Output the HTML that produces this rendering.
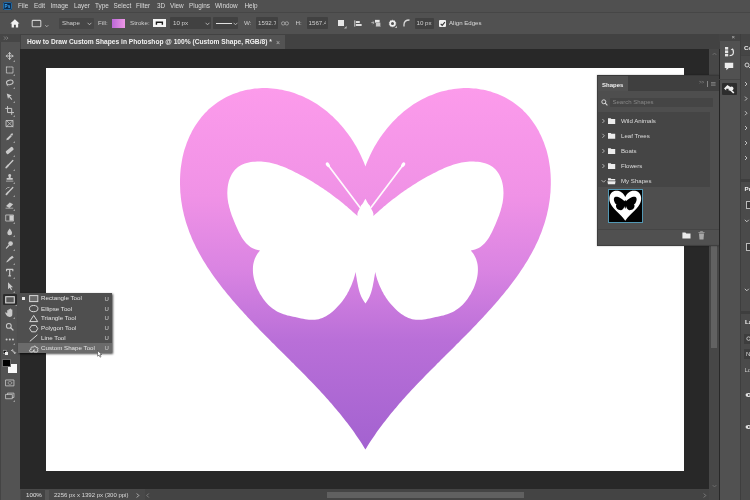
<!DOCTYPE html>
<html lang="en">
<head>
<meta charset="utf-8">
<title>How to Draw Custom Shapes in Photoshop</title>
<style>
*{margin:0;padding:0;box-sizing:border-box}
html,body{width:750px;height:500px;overflow:hidden;background:#282828}
body{position:relative;font-family:"Liberation Sans",sans-serif;color:#d8d8d8;font-size:6.2px;line-height:1}
.abs{position:absolute}
.t{position:absolute;white-space:nowrap;line-height:1}
svg{position:absolute;overflow:visible;filter:blur(.3px)}
.t{filter:blur(.35px)}
#menubar{left:0;top:0;width:750px;height:12px;background:#505050}
#optbar{left:0;top:12px;width:750px;height:22px;background:#515151;border-top:1px solid #464646}
#tabbar{left:0;top:33.5px;width:750px;height:15.5px;background:#424242}
#tab{left:21px;top:35px;width:264px;height:14px;background:#535353}
#toolbar{left:0;top:34px;width:19.8px;height:466px;background:#535353;border-left:1.2px solid #444}
#toolhead{left:0;top:34px;width:20px;height:8px;background:#464646}
#work{left:20px;top:49px;width:699px;height:440px;background:#282828}
#canvas{left:46.3px;top:67.5px;width:638.2px;height:403.5px;background:#fff}
#status{left:20px;top:489.4px;width:689px;height:10.6px;background:linear-gradient(90deg,#494949 0,#494949 125px,#444 125px)}
#zoomfld{left:20.5px;top:489.6px;width:24px;height:10.4px;background:#434343;border-right:4px solid #555;box-sizing:content-box}
#vscroll{left:709px;top:49px;width:10px;height:451px;background:#474747}
#vthumb{left:711px;top:245px;width:6px;height:103px;background:#626262}
#iconcol{left:719.5px;top:40.5px;width:20px;height:459.5px;background:#515151}
#rightp{left:741px;top:42px;width:9px;height:458px;background:#4a4a4a}
#rgap{left:739.5px;top:34px;width:1.5px;height:466px;background:#3e3e3e}
#rtop{left:719px;top:33.5px;width:31px;height:8.5px;background:#444}
.fld{position:absolute;background:#414141;border-radius:1px}
/* shapes panel */
#sp{left:596.6px;top:75.2px;width:122.4px;height:170.7px;background:#4e4e4e;border-left:1px solid #3e3e3e;border-bottom:1.6px solid #3f3f3f;border-top:.8px solid #383838;box-shadow:0 0 1.5px rgba(0,0,0,.35)}
#sphead{left:597.6px;top:76px;width:121.4px;height:15.3px;background:#3f3f3f}
#sptab{left:597.6px;top:76px;width:30px;height:15.3px;background:#515151}
#splist{left:597.6px;top:111.6px;width:112px;height:75px;background:#454545}
#spfoot{left:597.6px;top:229px;width:121.4px;height:15.3px;background:#505050;border-top:1px solid #454545}
#spsearch{left:610px;top:98px;width:102.6px;height:8.6px;background:#454545;border-radius:1px}
/* flyout */
#fly{left:18px;top:293px;width:94px;height:59.8px;background:#4f4f4f;box-shadow:1px 1px 2px rgba(0,0,0,.7)}
#flysel{left:18px;top:343px;width:94px;height:9.8px;background:#6b6b6b}
.m{top:3.2px;font-size:6.4px;color:#dadada}
.o{top:20.2px;font-size:6.2px;color:#cfcfcf}
.f{font-size:6.2px;left:41px;color:#e2e2e2}
.u{font-size:6px;left:104.5px;color:#cfcfcf}
.s{font-size:6.1px;left:621px;color:#dedede}
</style>
</head>
<body>
<div class="abs" id="menubar"></div>
<div class="abs" id="optbar"></div>
<div class="abs" id="tabbar"></div>
<div class="abs" id="tab"></div>
<div class="abs" id="work"></div>
<div class="abs" id="canvas"></div>

<!-- artwork -->
<svg style="left:0;top:0" width="750" height="500" viewBox="0 0 750 500">
<defs>
<linearGradient id="hg" x1="0" y1="88" x2="0" y2="449" gradientUnits="userSpaceOnUse">
<stop offset="0" stop-color="#fc9beb"/>
<stop offset="0.3" stop-color="#f092e6"/>
<stop offset="0.5" stop-color="#da84e2"/>
<stop offset="0.7" stop-color="#b96fd8"/>
<stop offset="1" stop-color="#a362d0"/>
</linearGradient>
</defs>
<path d="M365.4 166.5L364.6 164.2L363.7 161.9L362.7 159.7L361.7 157.4L360.7 155.2L359.6 152.9L358.5 150.7L357.3 148.5L356.1 146.3L354.8 144.2L353.5 142.0L352.2 139.9L350.8 137.8L349.3 135.7L347.9 133.7L346.3 131.7L344.8 129.7L343.2 127.7L341.5 125.8L339.9 123.9L338.2 122.0L336.4 120.2L334.6 118.4L332.8 116.6L330.9 114.9L329.0 113.2L327.1 111.6L325.1 110.0L323.1 108.5L321.0 107.0L319.0 105.5L316.9 104.1L314.7 102.8L312.6 101.5L310.4 100.2L308.1 99.0L305.9 97.9L303.6 96.8L301.3 95.8L298.9 94.9L296.6 93.9L294.2 93.1L291.8 92.3L289.4 91.6L286.9 91.0L284.5 90.4L282.0 89.8L279.6 89.4L277.1 89.0L274.6 88.7L272.1 88.4L269.6 88.2L267.1 88.1L264.6 88.1L262.1 88.1L259.6 88.2L257.2 88.4L254.7 88.6L252.2 89.0L249.8 89.4L247.3 89.8L244.9 90.3L242.5 90.9L240.1 91.6L237.8 92.4L235.4 93.2L233.1 94.0L230.9 95.0L228.6 96.0L226.4 97.1L224.2 98.2L222.1 99.4L220.0 100.7L218.0 102.0L216.0 103.4L214.0 104.9L212.1 106.4L210.2 108.0L208.4 109.6L206.7 111.4L205.0 113.1L203.3 114.9L201.7 116.8L200.2 118.7L198.7 120.7L197.3 122.7L195.9 124.7L194.6 126.8L193.3 129.0L192.1 131.1L191.0 133.4L189.9 135.6L188.8 137.9L187.9 140.2L186.9 142.5L186.1 144.9L185.3 147.2L184.5 149.6L183.8 152.0L183.2 154.5L182.6 156.9L182.1 159.4L181.7 161.9L181.3 164.4L180.9 166.9L180.6 169.4L180.4 171.9L180.2 174.4L180.1 177.0L180.0 179.5L180.0 182.0L180.0 184.6L180.1 187.1L180.2 189.7L180.3 192.2L180.6 194.7L180.8 197.3L181.1 199.8L181.5 202.3L181.9 204.8L182.3 207.3L182.8 209.8L183.4 212.3L183.9 214.8L184.6 217.2L185.2 219.6L185.9 222.0L186.7 224.4L187.5 226.8L188.3 229.1L189.1 231.5L190.0 233.8L191.0 236.1L191.9 238.4L192.9 240.7L194.0 242.9L195.0 245.1L196.1 247.4L197.2 249.6L198.4 251.8L199.6 253.9L200.8 256.1L202.0 258.2L203.3 260.4L204.6 262.5L205.9 264.6L207.2 266.7L208.6 268.8L210.0 270.8L211.4 272.9L212.8 274.9L214.2 276.9L215.7 279.0L217.2 281.0L218.7 282.9L220.2 284.9L221.7 286.9L223.2 288.9L224.8 290.8L226.3 292.7L227.9 294.7L229.5 296.6L231.1 298.5L232.7 300.4L234.3 302.3L236.0 304.2L237.6 306.1L239.3 307.9L240.9 309.8L242.6 311.6L244.3 313.5L246.0 315.3L247.7 317.2L249.4 319.0L251.1 320.8L252.8 322.6L254.5 324.5L256.3 326.3L258.0 328.1L259.8 329.9L261.5 331.7L263.3 333.4L265.0 335.2L266.8 337.0L268.6 338.8L270.3 340.6L272.1 342.4L273.9 344.1L275.7 345.9L277.4 347.7L279.2 349.5L281.0 351.2L282.8 353.0L284.6 354.8L286.3 356.5L288.1 358.3L289.9 360.1L291.7 361.9L293.5 363.6L295.2 365.4L297.0 367.2L298.8 369.0L300.6 370.8L302.3 372.5L304.1 374.3L305.8 376.1L307.6 377.9L309.3 379.7L311.1 381.5L312.8 383.3L314.5 385.1L316.3 386.9L318.0 388.8L319.7 390.6L321.4 392.4L323.1 394.3L324.7 396.1L326.4 398.0L328.1 399.8L329.7 401.7L331.4 403.6L333.0 405.5L334.6 407.4L336.2 409.3L337.8 411.2L339.4 413.1L341.0 415.0L342.5 416.9L344.1 418.9L345.6 420.9L347.1 422.8L348.6 424.8L350.1 426.8L351.6 428.8L353.1 430.8L354.5 432.8L355.9 434.9L357.3 436.9L358.7 439.0L360.1 441.1L361.4 443.1L362.8 445.3L364.1 447.4L365.4 449.5L366.7 447.4L368.0 445.3L369.4 443.1L370.7 441.1L372.1 439.0L373.5 436.9L374.9 434.9L376.3 432.8L377.7 430.8L379.2 428.8L380.7 426.8L382.2 424.8L383.7 422.8L385.2 420.9L386.7 418.9L388.3 416.9L389.8 415.0L391.4 413.1L393.0 411.2L394.6 409.3L396.2 407.4L397.8 405.5L399.4 403.6L401.1 401.7L402.7 399.8L404.4 398.0L406.1 396.1L407.7 394.3L409.4 392.4L411.1 390.6L412.8 388.8L414.5 386.9L416.3 385.1L418.0 383.3L419.7 381.5L421.5 379.7L423.2 377.9L425.0 376.1L426.7 374.3L428.5 372.5L430.2 370.8L432.0 369.0L433.8 367.2L435.6 365.4L437.3 363.6L439.1 361.9L440.9 360.1L442.7 358.3L444.5 356.5L446.2 354.8L448.0 353.0L449.8 351.2L451.6 349.5L453.4 347.7L455.1 345.9L456.9 344.1L458.7 342.4L460.5 340.6L462.2 338.8L464.0 337.0L465.8 335.2L467.5 333.4L469.3 331.7L471.0 329.9L472.8 328.1L474.5 326.3L476.3 324.5L478.0 322.6L479.7 320.8L481.4 319.0L483.1 317.2L484.8 315.3L486.5 313.5L488.2 311.6L489.9 309.8L491.5 307.9L493.2 306.1L494.8 304.2L496.5 302.3L498.1 300.4L499.7 298.5L501.3 296.6L502.9 294.7L504.5 292.7L506.0 290.8L507.6 288.9L509.1 286.9L510.6 284.9L512.1 282.9L513.6 281.0L515.1 279.0L516.6 276.9L518.0 274.9L519.4 272.9L520.8 270.8L522.2 268.8L523.6 266.7L524.9 264.6L526.2 262.5L527.5 260.4L528.8 258.2L530.0 256.1L531.2 253.9L532.4 251.8L533.6 249.6L534.7 247.4L535.8 245.1L536.8 242.9L537.9 240.7L538.9 238.4L539.8 236.1L540.8 233.8L541.7 231.5L542.5 229.1L543.3 226.8L544.1 224.4L544.9 222.0L545.6 219.6L546.2 217.2L546.9 214.8L547.4 212.3L548.0 209.8L548.5 207.3L548.9 204.8L549.3 202.3L549.7 199.8L550.0 197.3L550.2 194.7L550.5 192.2L550.6 189.7L550.7 187.1L550.8 184.6L550.8 182.0L550.8 179.5L550.7 177.0L550.6 174.4L550.4 171.9L550.2 169.4L549.9 166.9L549.5 164.4L549.1 161.9L548.7 159.4L548.2 156.9L547.6 154.5L547.0 152.0L546.3 149.6L545.5 147.2L544.7 144.9L543.9 142.5L542.9 140.2L542.0 137.9L540.9 135.6L539.8 133.4L538.7 131.1L537.5 129.0L536.2 126.8L534.9 124.7L533.5 122.7L532.1 120.7L530.6 118.7L529.1 116.8L527.5 114.9L525.8 113.1L524.1 111.4L522.4 109.6L520.6 108.0L518.7 106.4L516.8 104.9L514.8 103.4L512.8 102.0L510.8 100.7L508.7 99.4L506.6 98.2L504.4 97.1L502.2 96.0L499.9 95.0L497.7 94.0L495.4 93.2L493.0 92.4L490.7 91.6L488.3 90.9L485.9 90.3L483.5 89.8L481.0 89.4L478.6 89.0L476.1 88.6L473.6 88.4L471.2 88.2L468.7 88.1L466.2 88.1L463.7 88.1L461.2 88.2L458.7 88.4L456.2 88.7L453.7 89.0L451.2 89.4L448.8 89.8L446.3 90.4L443.9 91.0L441.4 91.6L439.0 92.3L436.6 93.1L434.2 93.9L431.9 94.9L429.5 95.8L427.2 96.8L424.9 97.9L422.7 99.0L420.4 100.2L418.2 101.5L416.1 102.8L413.9 104.1L411.8 105.5L409.8 107.0L407.7 108.5L405.7 110.0L403.7 111.6L401.8 113.2L399.9 114.9L398.0 116.6L396.2 118.4L394.4 120.2L392.6 122.0L390.9 123.9L389.3 125.8L387.6 127.7L386.0 129.7L384.5 131.7L382.9 133.7L381.5 135.7L380.0 137.8L378.6 139.9L377.3 142.0L376.0 144.2L374.7 146.3L373.5 148.5L372.3 150.7L371.2 152.9L370.1 155.2L369.1 157.4L368.1 159.7L367.1 161.9L366.2 164.2L365.4 166.5Z" fill="url(#hg)"/>
<path d="M365.4 198.8L364.4 200.5L363.5 202.3L362.4 203.9L361.0 205.4L360.2 207.5L359.2 209.5L358.1 211.5L357.4 213.6L357.4 216.0L355.9 214.6L354.4 213.3L352.9 211.9L351.4 210.6L349.9 209.3L348.4 207.9L346.9 206.6L345.4 205.4L343.8 204.1L342.3 202.8L340.7 201.6L339.2 200.3L337.6 199.1L336.0 197.9L334.4 196.7L332.8 195.5L331.2 194.3L329.6 193.1L328.0 192.0L326.4 190.8L324.7 189.7L323.1 188.6L321.4 187.5L319.8 186.4L318.1 185.3L316.4 184.2L314.7 183.2L313.0 182.1L311.3 181.1L309.6 180.1L307.9 179.1L306.1 178.1L304.4 177.1L302.6 176.1L300.9 175.2L299.1 174.2L297.3 173.3L295.5 172.4L293.7 171.5L291.9 170.6L290.1 169.7L288.3 168.9L286.5 168.1L284.6 167.3L282.7 166.6L280.9 165.9L279.0 165.2L277.1 164.6L275.1 164.0L273.2 163.5L271.2 163.0L269.3 162.6L267.3 162.2L265.3 161.9L263.2 161.7L261.2 161.6L259.1 161.5L257.1 161.5L255.0 161.7L252.9 161.8L250.8 162.1L248.8 162.5L246.8 163.0L244.9 163.6L243.0 164.3L241.3 165.1L239.6 166.0L238.0 167.1L236.6 168.2L235.2 169.5L234.0 170.9L232.9 172.4L231.9 174.0L231.0 175.7L230.2 177.4L229.5 179.2L228.9 181.1L228.4 183.0L228.0 185.0L227.7 187.0L227.5 189.0L227.4 191.1L227.3 193.1L227.4 195.1L227.5 197.2L227.7 199.2L228.0 201.2L228.3 203.2L228.8 205.1L229.2 207.1L229.8 209.1L230.3 211.0L231.0 212.9L231.6 214.9L232.3 216.8L233.1 218.7L233.8 220.6L234.6 222.5L235.4 224.4L236.2 226.2L237.0 228.1L237.9 230.0L238.7 231.8L239.6 233.6L240.6 235.3L241.5 237.0L242.6 238.7L243.7 240.3L244.9 241.8L246.1 243.2L247.5 244.5L248.9 245.8L250.4 246.9L252.1 247.9L253.9 248.8L255.8 249.5L257.8 250.1L260.0 250.6L258.6 252.2L257.4 253.8L256.4 255.5L255.5 257.2L254.7 259.0L254.1 260.9L253.6 262.8L253.2 264.7L253.0 266.6L252.9 268.6L252.9 270.6L253.0 272.6L253.2 274.6L253.5 276.6L253.9 278.6L254.4 280.6L255.0 282.6L255.7 284.5L256.4 286.5L257.2 288.4L258.1 290.2L259.1 292.1L260.0 293.9L261.1 295.6L262.2 297.3L263.3 298.9L264.5 300.5L265.7 302.0L267.0 303.5L268.4 304.9L269.8 306.2L271.3 307.5L272.9 308.7L274.5 309.8L276.2 310.9L278.0 311.9L279.9 312.8L281.7 313.6L283.6 314.3L285.5 314.8L287.4 315.4L289.3 315.8L291.2 316.3L293.2 316.7L295.1 317.1L297.1 317.6L299.1 318.0L301.1 318.4L303.1 318.8L305.1 319.2L307.1 319.5L309.0 319.7L311.0 319.8L313.0 319.8L314.9 319.7L316.8 319.5L318.7 319.2L320.6 318.6L322.4 318.0L324.3 317.1L326.0 316.2L327.8 315.1L329.5 314.0L331.1 312.7L332.7 311.4L334.3 310.0L335.8 308.6L337.2 307.1L338.6 305.6L340.0 304.1L341.3 302.5L342.5 300.9L343.7 299.3L344.8 297.7L345.8 296.0L346.9 294.4L347.8 292.6L348.8 290.9L349.6 289.1L350.5 287.3L351.3 285.5L352.0 283.7L352.7 281.8L353.4 279.9L354.0 278.0L354.6 276.0L355.1 274.0L355.6 272.0L355.9 274.0L356.2 276.1L356.6 278.1L356.9 280.2L357.3 282.3L357.7 284.3L358.1 286.4L358.6 288.4L359.1 290.5L359.7 292.5L360.4 294.4L361.2 296.4L362.1 298.2L363.1 300.1L364.2 301.8L365.5 303.5L366.6 301.8L367.7 300.1L368.7 298.2L369.6 296.4L370.4 294.4L371.1 292.5L371.7 290.5L372.2 288.4L372.7 286.4L373.1 284.3L373.5 282.3L373.9 280.2L374.2 278.1L374.6 276.1L374.9 274.0L375.2 272.0L375.7 274.0L376.2 276.0L376.8 278.0L377.4 279.9L378.1 281.8L378.8 283.7L379.5 285.5L380.3 287.3L381.2 289.1L382.0 290.9L383.0 292.6L383.9 294.4L385.0 296.0L386.0 297.7L387.1 299.3L388.3 300.9L389.5 302.5L390.8 304.1L392.2 305.6L393.6 307.1L395.0 308.6L396.5 310.0L398.1 311.4L399.7 312.7L401.3 314.0L403.0 315.1L404.8 316.2L406.5 317.1L408.4 318.0L410.2 318.6L412.1 319.2L414.0 319.5L415.9 319.7L417.8 319.8L419.8 319.8L421.8 319.7L423.7 319.5L425.7 319.2L427.7 318.8L429.7 318.4L431.7 318.0L433.7 317.6L435.7 317.1L437.6 316.7L439.6 316.3L441.5 315.8L443.4 315.4L445.3 314.8L447.2 314.3L449.1 313.6L450.9 312.8L452.8 311.9L454.6 310.9L456.3 309.8L457.9 308.7L459.5 307.5L461.0 306.2L462.4 304.9L463.8 303.5L465.1 302.0L466.3 300.5L467.5 298.9L468.6 297.3L469.7 295.6L470.8 293.9L471.7 292.1L472.7 290.2L473.6 288.4L474.4 286.5L475.1 284.5L475.8 282.6L476.4 280.6L476.9 278.6L477.3 276.6L477.6 274.6L477.8 272.6L477.9 270.6L477.9 268.6L477.8 266.6L477.6 264.7L477.2 262.8L476.7 260.9L476.1 259.0L475.3 257.2L474.4 255.5L473.4 253.8L472.2 252.2L470.8 250.6L473.0 250.1L475.0 249.5L476.9 248.8L478.7 247.9L480.4 246.9L481.9 245.8L483.3 244.5L484.7 243.2L485.9 241.8L487.1 240.3L488.2 238.7L489.3 237.0L490.2 235.3L491.2 233.6L492.1 231.8L492.9 230.0L493.8 228.1L494.6 226.2L495.4 224.4L496.2 222.5L497.0 220.6L497.7 218.7L498.5 216.8L499.2 214.9L499.8 212.9L500.5 211.0L501.0 209.1L501.6 207.1L502.0 205.1L502.5 203.2L502.8 201.2L503.1 199.2L503.3 197.2L503.4 195.1L503.5 193.1L503.4 191.1L503.3 189.0L503.1 187.0L502.8 185.0L502.4 183.0L501.9 181.1L501.3 179.2L500.6 177.4L499.8 175.7L498.9 174.0L497.9 172.4L496.8 170.9L495.6 169.5L494.2 168.2L492.8 167.1L491.2 166.0L489.5 165.1L487.8 164.3L485.9 163.6L484.0 163.0L482.0 162.5L480.0 162.1L477.9 161.8L475.8 161.7L473.7 161.5L471.7 161.5L469.6 161.6L467.6 161.7L465.5 161.9L463.5 162.2L461.5 162.6L459.6 163.0L457.6 163.5L455.7 164.0L453.7 164.6L451.8 165.2L449.9 165.9L448.1 166.6L446.2 167.3L444.3 168.1L442.5 168.9L440.7 169.7L438.9 170.6L437.1 171.5L435.3 172.4L433.5 173.3L431.7 174.2L429.9 175.2L428.2 176.1L426.4 177.1L424.7 178.1L422.9 179.1L421.2 180.1L419.5 181.1L417.8 182.1L416.1 183.2L414.4 184.2L412.7 185.3L411.0 186.4L409.4 187.5L407.7 188.6L406.1 189.7L404.4 190.8L402.8 192.0L401.2 193.1L399.6 194.3L398.0 195.5L396.4 196.7L394.8 197.9L393.2 199.1L391.6 200.3L390.1 201.6L388.5 202.8L387.0 204.1L385.4 205.4L383.9 206.6L382.4 207.9L380.9 209.3L379.4 210.6L377.9 211.9L376.4 213.3L374.9 214.6L373.4 216.0L373.4 213.6L372.7 211.5L371.6 209.5L370.6 207.5L369.8 205.4L368.4 203.9L367.3 202.3L366.4 200.5L365.4 198.8Z" fill="#fff"/>
<g stroke="#fff" stroke-width="1.7" stroke-linecap="round" fill="none" opacity=".95">
<path d="M360 207.5L328 165"/><path d="M371 207.500L403 165"/>
</g>
<ellipse cx="327.8" cy="164.8" rx="2.7" ry="1.7" transform="rotate(53 327.8 164.8)" fill="#fff"/>
<ellipse cx="403.2" cy="164.8" rx="2.7" ry="1.7" transform="rotate(-53 403.2 164.8)" fill="#fff"/>
</svg>

<!-- menu bar -->
<svg style="left:3px;top:2px" width="9" height="8" viewBox="0 0 9 8"><rect width="9" height="8" rx="1.6" fill="#0b2a4e"/><rect x=".5" y=".5" width="8" height="7" rx="1.3" fill="none" stroke="#38a6f5" stroke-width=".5"/><text x="1.6" y="6" font-size="4.6" font-weight="700" fill="#38a6f5" font-family="Liberation Sans, sans-serif">Ps</text></svg>
<span class="t m" style="left:18px">File</span>
<span class="t m" style="left:34px">Edit</span>
<span class="t m" style="left:50.5px">Image</span>
<span class="t m" style="left:74px">Layer</span>
<span class="t m" style="left:95px">Type</span>
<span class="t m" style="left:113.5px">Select</span>
<span class="t m" style="left:136px">Filter</span>
<span class="t m" style="left:157px">3D</span>
<span class="t m" style="left:170px">View</span>
<span class="t m" style="left:189px">Plugins</span>
<span class="t m" style="left:215px">Window</span>
<span class="t m" style="left:244.5px">Help</span>

<!-- options bar -->
<svg style="left:9.6px;top:18.6px" width="9.8" height="8.8" viewBox="0 0 11 10"><path d="M5.5 .4L.3 5h1.5v4.6h2.6V6.6h2.2v3h2.6V5h1.5z" fill="#f2f2f2"/></svg>
<svg style="left:31px;top:18.5px" width="20" height="10" viewBox="0 0 20 10"><rect x="1.2" y="1.4" width="8.6" height="6.4" rx=".8" fill="none" stroke="#cdcdcd" stroke-width="1.1"/><path d="M14.3 6.2l1.5 1.5 1.5-1.5" fill="none" stroke="#c8c8c8" stroke-width=".8"/></svg>
<div class="fld" style="left:59px;top:17.5px;width:35px;height:11.5px;background:#464646"></div>
<span class="t o" style="left:62px">Shape</span>
<svg style="left:86.5px;top:21.5px" width="5" height="4" viewBox="0 0 5 4"><path d="M.6 .8l1.9 2 1.9-2" fill="none" stroke="#c8c8c8" stroke-width=".8"/></svg>
<span class="t o" style="left:98px">Fill:</span>
<div class="abs" style="left:112.3px;top:19.4px;width:12.8px;height:8.4px;background:linear-gradient(90deg,#bb68d8,#ee98e6)"></div>
<span class="t o" style="left:130px">Stroke:</span>
<div class="abs" style="left:153px;top:19.2px;width:12.8px;height:8.2px;background:#f4f4f4"></div>
<svg style="left:153px;top:19.2px" width="12.8" height="8.2" viewBox="0 0 14 10.5"><path d="M3.2 7.4V4.2h7.6v3.2" fill="none" stroke="#1a1a1a" stroke-width="1.8"/></svg>
<div class="fld" style="left:170px;top:17px;width:41px;height:12px"></div>
<span class="t o" style="left:173px">10 px</span>
<svg style="left:204.5px;top:21.5px" width="5" height="4" viewBox="0 0 5 4"><path d="M.6 .8l1.9 2 1.9-2" fill="none" stroke="#c8c8c8" stroke-width=".8"/></svg>
<div class="fld" style="left:213px;top:17px;width:25px;height:12px"></div>
<div class="abs" style="left:216px;top:22.6px;width:16px;height:1.3px;background:#e0e0e0"></div>
<svg style="left:232.6px;top:21.5px" width="5" height="4" viewBox="0 0 5 4"><path d="M.6 .8l1.9 2 1.9-2" fill="none" stroke="#c8c8c8" stroke-width=".8"/></svg>
<span class="t o" style="left:244px">W:</span>
<div class="fld" style="left:256px;top:17px;width:21.5px;height:12px"></div>
<span class="t o" style="left:258px;width:18px;overflow:hidden">1592.7</span>
<svg style="left:280.5px;top:21px" width="8" height="5" viewBox="0 0 8 5"><rect x=".5" y=".8" width="3.4" height="3.2" rx="1.6" fill="none" stroke="#a8a8a8" stroke-width=".9"/><rect x="4.1" y=".8" width="3.4" height="3.2" rx="1.6" fill="none" stroke="#a8a8a8" stroke-width=".9"/></svg>
<span class="t o" style="left:295.5px">H:</span>
<div class="fld" style="left:306.5px;top:17px;width:21px;height:12px"></div>
<span class="t o" style="left:308.5px;width:17.5px;overflow:hidden">1567.4</span>
<div class="abs" style="left:338px;top:20.3px;width:5.8px;height:5.8px;background:#e6e6e6"></div>
<svg style="left:343.6px;top:25.6px" width="2.6" height="2.6" viewBox="0 0 3 3"><path d="M3 0v3H0z" fill="#bbb"/></svg>
<svg style="left:354px;top:19.6px" width="8.6" height="7.8" viewBox="0 0 11 10"><path d="M1 .5v8" stroke="#e8e8e8" stroke-width="1.1"/><rect x="2.4" y="1.4" width="5" height="2.4" fill="#e8e8e8"/><rect x="2.4" y="5.2" width="7.4" height="2.4" fill="#e8e8e8"/></svg>
<svg style="left:370.5px;top:19px" width="10.4" height="9.5" viewBox="0 0 12 11"><path d="M.4 4.2h2.4M2 2.8l1.6 1.4L2 5.6" stroke="#ddd" stroke-width=".8" fill="none"/><rect x="4.6" y="1" width="5.4" height="3.6" fill="#e8e8e8"/><rect x="5.6" y="4.2" width="5.4" height="4.8" fill="#c9c9c9" stroke="#555" stroke-width=".4"/></svg>

<svg style="left:388.6px;top:19.6px" width="8.4" height="8.4" viewBox="0 0 11 11"><circle cx="4.6" cy="4.6" r="3.1" fill="none" stroke="#efefef" stroke-width="2.2"/><circle cx="4.6" cy="4.6" r="4.3" fill="none" stroke="#efefef" stroke-width=".9" stroke-dasharray="1.5 1.2"/><path d="M10.5 7.5v3h-3z" fill="#bbb"/></svg>
<svg style="left:403px;top:19px" width="7" height="8" viewBox="0 0 7 8"><path d="M1 7.5V5.5Q1 1 6.5 1" fill="none" stroke="#d8d8d8" stroke-width="1.3"/></svg>
<div class="fld" style="left:414.5px;top:17.5px;width:19px;height:11px"></div>
<span class="t o" style="left:416.5px">10 px</span>
<div class="abs" style="left:438.5px;top:19.5px;width:7.5px;height:7.5px;background:#efefef;border-radius:1px"></div>
<svg style="left:438.5px;top:19.5px" width="7.5" height="7.5" viewBox="0 0 7.5 7.5"><path d="M1.7 3.8l1.5 1.6 2.7-3.3" fill="none" stroke="#333" stroke-width="1.1"/></svg>
<span class="t o" style="left:449px;font-size:6.1px;color:#dcdcdc">Align Edges</span>

<!-- document tab -->
<span class="t" style="left:27px;top:38.8px;font-size:6.65px;font-weight:700;color:#f0f0f0">How to Draw Custom Shapes in Photoshop @ 100% (Custom Shape, RGB/8) *</span>
<span class="t" style="left:276px;top:38.5px;font-size:7px;color:#b4b4b4">×</span>

<div class="abs" id="status"></div>
<div class="abs" id="zoomfld"></div>
<span class="t" style="left:26px;top:491.8px;font-size:6.2px;color:#e0e0e0">100%</span>
<span class="t" style="left:54px;top:491.8px;font-size:6px;color:#dadada">2256 px x 1392 px (300 ppi)</span>
<div class="abs" style="left:326.5px;top:491.8px;width:197.5px;height:6.6px;background:#606060"></div>
<svg style="left:703px;top:492.8px" width="4" height="5" viewBox="0 0 4 5"><path d="M.8 .5l2 2-2 2" fill="none" stroke="#8c8c8c" stroke-width=".8"/></svg>
<svg style="left:145.5px;top:492.8px" width="4" height="5" viewBox="0 0 4 5"><path d="M2.800 .5l-2 2 2 2" fill="none" stroke="#8c8c8c" stroke-width=".8"/></svg>
<svg style="left:135.5px;top:492.5px" width="4" height="5" viewBox="0 0 4 5"><path d="M.8 .5l2 2-2 2" fill="none" stroke="#d0d0d0" stroke-width=".8"/></svg>

<div class="abs" id="vscroll"></div>
<div class="abs" id="vthumb"></div>
<svg style="left:711.5px;top:52px" width="5" height="4" viewBox="0 0 5 4"><path d="M.6 3l1.9-2 1.9 2" fill="none" stroke="#747474" stroke-width=".8"/></svg>
<svg style="left:711.5px;top:483.5px" width="5" height="4" viewBox="0 0 5 4"><path d="M.6 1l1.9 2 1.9-2" fill="none" stroke="#747474" stroke-width=".8"/></svg>
<div class="abs" id="rtop"></div>
<div class="abs" id="iconcol"></div>
<div class="abs" id="rightp"></div>
<div class="abs" id="rgap"></div>

<!-- right dock -->
<span class="t" style="left:731.5px;top:33.8px;font-size:6px;color:#bdbdbd">×</span>
<svg style="left:723.5px;top:46px" width="12" height="12" viewBox="0 0 12 12"><rect x="1" y="1" width="3.2" height="2.6" fill="#e6e6e6"/><rect x="1" y="4.4" width="3.2" height="2.6" fill="#e6e6e6"/><rect x="1" y="7.8" width="3.2" height="2.6" fill="#e6e6e6"/><path d="M5.6 9.6c3.6 0 4.6-2.6 3.4-5.4" fill="none" stroke="#e6e6e6" stroke-width="1.3"/><path d="M6.6 3.8l2.2-1.6 1.4 2.6z" fill="#e6e6e6"/></svg>
<svg style="left:724.3px;top:62.3px" width="10" height="9" viewBox="0 0 11 10"><path d="M.8 .8h9.4v6h-5l-2.6 2.4V6.8H.8z" fill="#ececec"/></svg>
<div class="abs" style="left:719px;top:78.8px;width:21px;height:1px;background:#454545"></div>
<div class="abs" style="left:722px;top:83px;width:14.5px;height:12px;background:#2d2d2d;border-radius:1px"></div>
<svg style="left:723px;top:84px" width="13" height="10" viewBox="0 0 13 10"><path d="M1 4.6L4.4 1l3.4 2.2v3.2H5.6v-1.600000000000001H3.2v1.8z" fill="#efefef"/><circle cx="8.6" cy="4.4" r="1.9" fill="#efefef"/><path d="M7.4 5.6l3.4 3.4" stroke="#efefef" stroke-width="1.6"/></svg>
<div class="abs" style="left:741px;top:42px;width:9px;height:14px;background:#424242"></div>
<div class="abs" style="left:741px;top:42px;width:9px;height:13px;background:#454545"></div>
<span class="t" style="left:744px;top:45px;font-size:6.2px;font-weight:700;color:#eee">Co</span>
<svg style="left:744px;top:62px" width="7" height="7" viewBox="0 0 7 7"><circle cx="3" cy="3" r="2" fill="none" stroke="#ddd" stroke-width=".9"/><path d="M4.4 4.4l2 2" stroke="#ddd" stroke-width=".9"/></svg>
<svg style="left:744px;top:80px" width="5" height="90" viewBox="0 0 5 90"><g fill="none" stroke="#cfcfcf" stroke-width=".9"><path d="M1 2l2 2-2 2"/><path d="M1 16.6l2 2-2 2"/><path d="M1 31.200000000000003l2 2-2 2"/><path d="M1 46l2 2-2 2"/><path d="M1 61l2 2-2 2"/><path d="M1 76l2 2-2 2"/></g></svg>
<div class="abs" style="left:741px;top:179px;width:9px;height:3px;background:#3e3e3e"></div>
<span class="t" style="left:744.5px;top:186px;font-size:6.2px;font-weight:700;color:#eee">Pr</span>
<div class="abs" style="left:746px;top:201px;width:6px;height:8px;background:#383838;border:1px solid #bbb"></div>
<svg style="left:744px;top:219px" width="6" height="4" viewBox="0 0 6 4"><path d="M.8 .8l2 2 2-2" fill="none" stroke="#cfcfcf" stroke-width=".9"/></svg>
<div class="abs" style="left:746px;top:243px;width:6px;height:8px;background:#383838;border:1px solid #bbb"></div>
<svg style="left:744px;top:288px" width="6" height="4" viewBox="0 0 6 4"><path d="M.8 .8l2 2 2-2" fill="none" stroke="#cfcfcf" stroke-width=".9"/></svg>
<div class="abs" style="left:741px;top:311px;width:9px;height:3px;background:#3e3e3e"></div>
<span class="t" style="left:745px;top:319px;font-size:6.2px;font-weight:700;color:#eee">La</span>
<div class="abs" style="left:744px;top:334px;width:8px;height:10px;background:#3d3d3d"></div>
<svg style="left:745.5px;top:336px" width="6" height="6" viewBox="0 0 6 6"><circle cx="2.6" cy="2.6" r="1.8" fill="none" stroke="#ccc" stroke-width=".9"/></svg>
<div class="abs" style="left:744px;top:349px;width:8px;height:10px;background:#3d3d3d"></div>
<span class="t" style="left:746px;top:351px;font-size:6px;color:#ddd">N</span>
<span class="t" style="left:744.5px;top:367px;font-size:6px;color:#ccc">Lo</span>
<svg style="left:745px;top:392px" width="6" height="6" viewBox="0 0 6 6"><ellipse cx="3.6" cy="3" rx="3" ry="1.9" fill="#e4e4e4"/><circle cx="3.8" cy="3" r=".9" fill="#444"/></svg>
<svg style="left:745px;top:424px" width="6" height="6" viewBox="0 0 6 6"><ellipse cx="3.6" cy="3" rx="3" ry="1.9" fill="#e4e4e4"/><circle cx="3.8" cy="3" r=".9" fill="#444"/></svg>


<!-- Shapes panel -->
<div class="abs" id="sp"></div>
<div class="abs" id="sphead"></div>
<div class="abs" id="sptab"></div>
<span class="t" style="left:602px;top:81.6px;font-size:6px;font-weight:700;color:#f0f0f0">Shapes</span>
<span class="t" style="left:699px;top:81.4px;font-size:4.6px;color:#8e8e8e;letter-spacing:-.3px">&gt;&gt;</span>
<div class="abs" style="left:707.2px;top:81px;width:.8px;height:5.6px;background:#858585"></div>
<svg style="left:711px;top:81.8px" width="4.6" height="4" viewBox="0 0 6 5"><path d="M0 .6h6M0 2.4h6M0 4.2h6" stroke="#9a9a9a" stroke-width=".8"/></svg>
<svg style="left:601px;top:98.5px" width="7" height="7" viewBox="0 0 7 7"><circle cx="2.8" cy="2.8" r="2" fill="none" stroke="#d6d6d6" stroke-width="1"/><path d="M4.2 4.2l2.2 2.2" stroke="#d6d6d6" stroke-width="1.1"/></svg>
<div class="abs" id="spsearch"></div>
<span class="t" style="left:612.5px;top:99.3px;font-size:6px;color:#878787">Search Shapes</span>
<div class="abs" id="splist"></div>
<svg style="left:601px;top:113px" width="16" height="74" viewBox="0 0 16 74">
<g fill="none" stroke="#bdbdbd" stroke-width=".9"><path d="M1.400 6.000l2 2-2 2"/><path d="M1.400 20.800l2 2-2 2"/><path d="M1.400 36.000l2 2-2 2"/><path d="M1.400 51.000l2 2-2 2"/><path d="M.6 67.200l2 2 2-2"/></g>
<g fill="#ececec"><path d="M7 5.200h2.600l.8 .8h3.800v5h-7.200z"/><path d="M7 20.000h2.600l.8 .8h3.800v5h-7.200z"/><path d="M7 35.200h2.600l.8 .8h3.800v5h-7.200z"/><path d="M7 50.200h2.600l.8 .8h3.800v5h-7.200z"/><path d="M7 65.200h2.600l.8 .8h3.800v1.400h-7.200z"/><path d="M6.400 68.200h8.200l-.6 3h-7z"/></g>
</svg>
<span class="t s" style="top:117.800px">Wild Animals</span>
<span class="t s" style="top:132.500px">Leaf Trees</span>
<span class="t s" style="top:147.800px">Boats</span>
<span class="t s" style="top:162.800px">Flowers</span>
<span class="t s" style="top:177.800px">My Shapes</span>
<div class="abs" style="left:608px;top:189px;width:34.5px;height:33.500px;background:#020202;border:1px solid #5297b3"></div>
<svg style="left:609px;top:190px" width="32.500" height="31.500" viewBox="176 80 379 377" preserveAspectRatio="none"><path d="M365.4 166.5L364.6 164.2L363.7 161.9L362.7 159.7L361.7 157.4L360.7 155.2L359.6 152.9L358.5 150.7L357.3 148.5L356.1 146.3L354.8 144.2L353.5 142.0L352.2 139.9L350.8 137.8L349.3 135.7L347.9 133.7L346.3 131.7L344.8 129.7L343.2 127.7L341.5 125.8L339.9 123.9L338.2 122.0L336.4 120.2L334.6 118.4L332.8 116.6L330.9 114.9L329.0 113.2L327.1 111.6L325.1 110.0L323.1 108.5L321.0 107.0L319.0 105.5L316.9 104.1L314.7 102.8L312.6 101.5L310.4 100.2L308.1 99.0L305.9 97.9L303.6 96.8L301.3 95.8L298.9 94.9L296.6 93.9L294.2 93.1L291.8 92.3L289.4 91.6L286.9 91.0L284.5 90.4L282.0 89.8L279.6 89.4L277.1 89.0L274.6 88.7L272.1 88.4L269.6 88.2L267.1 88.1L264.6 88.1L262.1 88.1L259.6 88.2L257.2 88.4L254.7 88.6L252.2 89.0L249.8 89.4L247.3 89.8L244.9 90.3L242.5 90.9L240.1 91.6L237.8 92.4L235.4 93.2L233.1 94.0L230.9 95.0L228.6 96.0L226.4 97.1L224.2 98.2L222.1 99.4L220.0 100.7L218.0 102.0L216.0 103.4L214.0 104.9L212.1 106.4L210.2 108.0L208.4 109.6L206.7 111.4L205.0 113.1L203.3 114.9L201.7 116.8L200.2 118.7L198.7 120.7L197.3 122.7L195.9 124.7L194.6 126.8L193.3 129.0L192.1 131.1L191.0 133.4L189.9 135.6L188.8 137.9L187.9 140.2L186.9 142.5L186.1 144.9L185.3 147.2L184.5 149.6L183.8 152.0L183.2 154.5L182.6 156.9L182.1 159.4L181.7 161.9L181.3 164.4L180.9 166.9L180.6 169.4L180.4 171.9L180.2 174.4L180.1 177.0L180.0 179.5L180.0 182.0L180.0 184.6L180.1 187.1L180.2 189.7L180.3 192.2L180.6 194.7L180.8 197.3L181.1 199.8L181.5 202.3L181.9 204.8L182.3 207.3L182.8 209.8L183.4 212.3L183.9 214.8L184.6 217.2L185.2 219.6L185.9 222.0L186.7 224.4L187.5 226.8L188.3 229.1L189.1 231.5L190.0 233.8L191.0 236.1L191.9 238.4L192.9 240.7L194.0 242.9L195.0 245.1L196.1 247.4L197.2 249.6L198.4 251.8L199.6 253.9L200.8 256.1L202.0 258.2L203.3 260.4L204.6 262.5L205.9 264.6L207.2 266.7L208.6 268.8L210.0 270.8L211.4 272.9L212.8 274.9L214.2 276.9L215.7 279.0L217.2 281.0L218.7 282.9L220.2 284.9L221.7 286.9L223.2 288.9L224.8 290.8L226.3 292.7L227.9 294.7L229.5 296.6L231.1 298.5L232.7 300.4L234.3 302.3L236.0 304.2L237.6 306.1L239.3 307.9L240.9 309.8L242.6 311.6L244.3 313.5L246.0 315.3L247.7 317.2L249.4 319.0L251.1 320.8L252.8 322.6L254.5 324.5L256.3 326.3L258.0 328.1L259.8 329.9L261.5 331.7L263.3 333.4L265.0 335.2L266.8 337.0L268.6 338.8L270.3 340.6L272.1 342.4L273.9 344.1L275.7 345.9L277.4 347.7L279.2 349.5L281.0 351.2L282.8 353.0L284.6 354.8L286.3 356.5L288.1 358.3L289.9 360.1L291.7 361.9L293.5 363.6L295.2 365.4L297.0 367.2L298.8 369.0L300.6 370.8L302.3 372.5L304.1 374.3L305.8 376.1L307.6 377.9L309.3 379.7L311.1 381.5L312.8 383.3L314.5 385.1L316.3 386.9L318.0 388.8L319.7 390.6L321.4 392.4L323.1 394.3L324.7 396.1L326.4 398.0L328.1 399.8L329.7 401.7L331.4 403.6L333.0 405.5L334.6 407.4L336.2 409.3L337.8 411.2L339.4 413.1L341.0 415.0L342.5 416.9L344.1 418.9L345.6 420.9L347.1 422.8L348.6 424.8L350.1 426.8L351.6 428.8L353.1 430.8L354.5 432.8L355.9 434.9L357.3 436.9L358.7 439.0L360.1 441.1L361.4 443.1L362.8 445.3L364.1 447.4L365.4 449.5L366.7 447.4L368.0 445.3L369.4 443.1L370.7 441.1L372.1 439.0L373.5 436.9L374.9 434.9L376.3 432.8L377.7 430.8L379.2 428.8L380.7 426.8L382.2 424.8L383.7 422.8L385.2 420.9L386.7 418.9L388.3 416.9L389.8 415.0L391.4 413.1L393.0 411.2L394.6 409.3L396.2 407.4L397.8 405.5L399.4 403.6L401.1 401.7L402.7 399.8L404.4 398.0L406.1 396.1L407.7 394.3L409.4 392.4L411.1 390.6L412.8 388.8L414.5 386.9L416.3 385.1L418.0 383.3L419.7 381.5L421.5 379.7L423.2 377.9L425.0 376.1L426.7 374.3L428.5 372.5L430.2 370.8L432.0 369.0L433.8 367.2L435.6 365.4L437.3 363.6L439.1 361.9L440.9 360.1L442.7 358.3L444.5 356.5L446.2 354.8L448.0 353.0L449.8 351.2L451.6 349.5L453.4 347.7L455.1 345.9L456.9 344.1L458.7 342.4L460.5 340.6L462.2 338.8L464.0 337.0L465.8 335.2L467.5 333.4L469.3 331.7L471.0 329.9L472.8 328.1L474.5 326.3L476.3 324.5L478.0 322.6L479.7 320.8L481.4 319.0L483.1 317.2L484.8 315.3L486.5 313.5L488.2 311.6L489.9 309.8L491.5 307.9L493.2 306.1L494.8 304.2L496.5 302.3L498.1 300.4L499.7 298.5L501.3 296.6L502.9 294.7L504.5 292.7L506.0 290.8L507.6 288.9L509.1 286.9L510.6 284.9L512.1 282.9L513.6 281.0L515.1 279.0L516.6 276.9L518.0 274.9L519.4 272.9L520.8 270.8L522.2 268.8L523.6 266.7L524.9 264.6L526.2 262.5L527.5 260.4L528.8 258.2L530.0 256.1L531.2 253.9L532.4 251.8L533.6 249.6L534.7 247.4L535.8 245.1L536.8 242.9L537.9 240.7L538.9 238.4L539.8 236.1L540.8 233.8L541.7 231.5L542.5 229.1L543.3 226.8L544.1 224.4L544.9 222.0L545.6 219.6L546.2 217.2L546.9 214.8L547.4 212.3L548.0 209.8L548.5 207.3L548.9 204.8L549.3 202.3L549.7 199.8L550.0 197.3L550.2 194.7L550.5 192.2L550.6 189.7L550.7 187.1L550.8 184.6L550.8 182.0L550.8 179.5L550.7 177.0L550.6 174.4L550.4 171.9L550.2 169.4L549.9 166.9L549.5 164.4L549.1 161.9L548.7 159.4L548.2 156.9L547.6 154.5L547.0 152.0L546.3 149.6L545.5 147.2L544.7 144.9L543.9 142.5L542.9 140.2L542.0 137.9L540.9 135.6L539.8 133.4L538.7 131.1L537.5 129.0L536.2 126.8L534.9 124.7L533.5 122.7L532.1 120.7L530.6 118.7L529.1 116.8L527.5 114.9L525.8 113.1L524.1 111.4L522.4 109.6L520.6 108.0L518.7 106.4L516.8 104.9L514.8 103.4L512.8 102.0L510.8 100.7L508.7 99.4L506.6 98.2L504.4 97.1L502.2 96.0L499.9 95.0L497.7 94.0L495.4 93.2L493.0 92.4L490.7 91.6L488.3 90.9L485.9 90.3L483.5 89.8L481.0 89.4L478.6 89.0L476.1 88.6L473.6 88.4L471.2 88.2L468.7 88.1L466.2 88.1L463.7 88.1L461.2 88.2L458.7 88.4L456.2 88.7L453.7 89.0L451.2 89.4L448.8 89.8L446.3 90.4L443.9 91.0L441.4 91.6L439.0 92.3L436.6 93.1L434.2 93.9L431.9 94.9L429.5 95.8L427.2 96.8L424.9 97.9L422.7 99.0L420.4 100.2L418.2 101.5L416.1 102.8L413.9 104.1L411.8 105.5L409.8 107.0L407.7 108.5L405.7 110.0L403.7 111.6L401.8 113.2L399.9 114.9L398.0 116.6L396.2 118.4L394.4 120.2L392.6 122.0L390.9 123.9L389.3 125.8L387.6 127.7L386.0 129.7L384.5 131.7L382.9 133.7L381.5 135.7L380.0 137.8L378.6 139.9L377.3 142.0L376.0 144.2L374.7 146.3L373.5 148.5L372.3 150.7L371.2 152.9L370.1 155.2L369.1 157.4L368.1 159.7L367.1 161.9L366.2 164.2L365.4 166.5Z" fill="#fff"/><g transform="translate(365.500 245) scale(.96 1.02) translate(-365.500 -245)"><path d="M365.4 198.8L364.4 200.5L363.5 202.3L362.4 203.9L361.0 205.4L360.2 207.5L359.2 209.5L358.1 211.5L357.4 213.6L357.4 216.0L355.9 214.6L354.4 213.3L352.9 211.9L351.4 210.6L349.9 209.3L348.4 207.9L346.9 206.6L345.4 205.4L343.8 204.1L342.3 202.8L340.7 201.6L339.2 200.3L337.6 199.1L336.0 197.9L334.4 196.7L332.8 195.5L331.2 194.3L329.6 193.1L328.0 192.0L326.4 190.8L324.7 189.7L323.1 188.6L321.4 187.5L319.8 186.4L318.1 185.3L316.4 184.2L314.7 183.2L313.0 182.1L311.3 181.1L309.6 180.1L307.9 179.1L306.1 178.1L304.4 177.1L302.6 176.1L300.9 175.2L299.1 174.2L297.3 173.3L295.5 172.4L293.7 171.5L291.9 170.6L290.1 169.7L288.3 168.9L286.5 168.1L284.6 167.3L282.7 166.6L280.9 165.9L279.0 165.2L277.1 164.6L275.1 164.0L273.2 163.5L271.2 163.0L269.3 162.6L267.3 162.2L265.3 161.9L263.2 161.7L261.2 161.6L259.1 161.5L257.1 161.5L255.0 161.7L252.9 161.8L250.8 162.1L248.8 162.5L246.8 163.0L244.9 163.6L243.0 164.3L241.3 165.1L239.6 166.0L238.0 167.1L236.6 168.2L235.2 169.5L234.0 170.9L232.9 172.4L231.9 174.0L231.0 175.7L230.2 177.4L229.5 179.2L228.9 181.1L228.4 183.0L228.0 185.0L227.7 187.0L227.5 189.0L227.4 191.1L227.3 193.1L227.4 195.1L227.5 197.2L227.7 199.2L228.0 201.2L228.3 203.2L228.8 205.1L229.2 207.1L229.8 209.1L230.3 211.0L231.0 212.9L231.6 214.9L232.3 216.8L233.1 218.7L233.8 220.6L234.6 222.5L235.4 224.4L236.2 226.2L237.0 228.1L237.9 230.0L238.7 231.8L239.6 233.6L240.6 235.3L241.5 237.0L242.6 238.7L243.7 240.3L244.9 241.8L246.1 243.2L247.5 244.5L248.9 245.8L250.4 246.9L252.1 247.9L253.9 248.8L255.8 249.5L257.8 250.1L260.0 250.6L258.6 252.2L257.4 253.8L256.4 255.5L255.5 257.2L254.7 259.0L254.1 260.9L253.6 262.8L253.2 264.7L253.0 266.6L252.9 268.6L252.9 270.6L253.0 272.6L253.2 274.6L253.5 276.6L253.9 278.6L254.4 280.6L255.0 282.6L255.7 284.5L256.4 286.5L257.2 288.4L258.1 290.2L259.1 292.1L260.0 293.9L261.1 295.6L262.2 297.3L263.3 298.9L264.5 300.5L265.7 302.0L267.0 303.5L268.4 304.9L269.8 306.2L271.3 307.5L272.9 308.7L274.5 309.8L276.2 310.9L278.0 311.9L279.9 312.8L281.7 313.6L283.6 314.3L285.5 314.8L287.4 315.4L289.3 315.8L291.2 316.3L293.2 316.7L295.1 317.1L297.1 317.6L299.1 318.0L301.1 318.4L303.1 318.8L305.1 319.2L307.1 319.5L309.0 319.7L311.0 319.8L313.0 319.8L314.9 319.7L316.8 319.5L318.7 319.2L320.6 318.6L322.4 318.0L324.3 317.1L326.0 316.2L327.8 315.1L329.5 314.0L331.1 312.7L332.7 311.4L334.3 310.0L335.8 308.6L337.2 307.1L338.6 305.6L340.0 304.1L341.3 302.5L342.5 300.9L343.7 299.3L344.8 297.7L345.8 296.0L346.9 294.4L347.8 292.6L348.8 290.9L349.6 289.1L350.5 287.3L351.3 285.5L352.0 283.7L352.7 281.8L353.4 279.9L354.0 278.0L354.6 276.0L355.1 274.0L355.6 272.0L355.9 274.0L356.2 276.1L356.6 278.1L356.9 280.2L357.3 282.3L357.7 284.3L358.1 286.4L358.6 288.4L359.1 290.5L359.7 292.5L360.4 294.4L361.2 296.4L362.1 298.2L363.1 300.1L364.2 301.8L365.5 303.5L366.6 301.8L367.7 300.1L368.7 298.2L369.6 296.4L370.4 294.4L371.1 292.5L371.7 290.5L372.2 288.4L372.7 286.4L373.1 284.3L373.5 282.3L373.9 280.2L374.2 278.1L374.6 276.1L374.9 274.0L375.2 272.0L375.7 274.0L376.2 276.0L376.8 278.0L377.4 279.9L378.1 281.8L378.8 283.7L379.5 285.5L380.3 287.3L381.2 289.1L382.0 290.9L383.0 292.6L383.9 294.4L385.0 296.0L386.0 297.7L387.1 299.3L388.3 300.9L389.5 302.5L390.8 304.1L392.2 305.6L393.6 307.1L395.0 308.6L396.5 310.0L398.1 311.4L399.7 312.7L401.3 314.0L403.0 315.1L404.8 316.2L406.5 317.1L408.4 318.0L410.2 318.6L412.1 319.2L414.0 319.5L415.9 319.7L417.8 319.8L419.8 319.8L421.8 319.7L423.7 319.5L425.7 319.2L427.7 318.8L429.7 318.4L431.7 318.0L433.7 317.6L435.7 317.1L437.6 316.7L439.6 316.3L441.5 315.8L443.4 315.4L445.3 314.8L447.2 314.3L449.1 313.6L450.9 312.8L452.8 311.9L454.6 310.9L456.3 309.8L457.9 308.7L459.5 307.5L461.0 306.2L462.4 304.9L463.8 303.5L465.1 302.0L466.3 300.5L467.5 298.9L468.6 297.3L469.7 295.6L470.8 293.9L471.7 292.1L472.7 290.2L473.6 288.4L474.4 286.5L475.1 284.5L475.8 282.6L476.4 280.6L476.9 278.6L477.3 276.6L477.6 274.6L477.8 272.6L477.9 270.6L477.9 268.6L477.8 266.6L477.6 264.7L477.2 262.8L476.7 260.9L476.1 259.0L475.3 257.2L474.4 255.5L473.4 253.8L472.2 252.2L470.8 250.6L473.0 250.1L475.0 249.5L476.9 248.8L478.7 247.9L480.4 246.9L481.9 245.8L483.3 244.5L484.7 243.2L485.9 241.8L487.1 240.3L488.2 238.7L489.3 237.0L490.2 235.3L491.2 233.6L492.1 231.8L492.9 230.0L493.8 228.1L494.6 226.2L495.4 224.4L496.2 222.5L497.0 220.6L497.7 218.7L498.5 216.8L499.2 214.9L499.8 212.9L500.5 211.0L501.0 209.1L501.6 207.1L502.0 205.1L502.5 203.2L502.8 201.2L503.1 199.2L503.3 197.2L503.4 195.1L503.5 193.1L503.4 191.1L503.3 189.0L503.1 187.0L502.8 185.0L502.4 183.0L501.9 181.1L501.3 179.2L500.6 177.4L499.8 175.7L498.9 174.0L497.9 172.4L496.8 170.9L495.6 169.5L494.2 168.2L492.8 167.1L491.2 166.0L489.5 165.1L487.8 164.3L485.9 163.6L484.0 163.0L482.0 162.5L480.0 162.1L477.9 161.8L475.8 161.7L473.7 161.5L471.7 161.5L469.6 161.6L467.6 161.7L465.5 161.9L463.5 162.2L461.5 162.6L459.6 163.0L457.6 163.5L455.7 164.0L453.7 164.6L451.8 165.2L449.9 165.9L448.1 166.6L446.2 167.3L444.3 168.1L442.5 168.9L440.7 169.7L438.9 170.6L437.1 171.5L435.3 172.4L433.5 173.3L431.7 174.2L429.9 175.2L428.2 176.1L426.4 177.1L424.7 178.1L422.9 179.1L421.2 180.1L419.5 181.1L417.8 182.1L416.1 183.2L414.4 184.2L412.7 185.3L411.0 186.4L409.4 187.5L407.7 188.6L406.1 189.7L404.4 190.8L402.8 192.0L401.2 193.1L399.6 194.3L398.0 195.5L396.4 196.7L394.8 197.9L393.2 199.1L391.6 200.3L390.1 201.6L388.5 202.8L387.0 204.1L385.4 205.4L383.9 206.6L382.4 207.9L380.9 209.3L379.4 210.6L377.9 211.9L376.4 213.3L374.9 214.6L373.4 216.0L373.4 213.6L372.7 211.5L371.6 209.5L370.6 207.5L369.8 205.4L368.4 203.9L367.3 202.3L366.4 200.5L365.4 198.8Z" fill="#000"/></g></svg>
<div class="abs" id="spfoot"></div>
<svg style="left:681.500px;top:231.500px" width="9" height="7" viewBox="0 0 9 7"><path d="M.4 .6h3l.9 1h4.200v5h-8.100z" fill="#ececec"/></svg>
<svg style="left:697.500px;top:230.500px" width="7" height="9" viewBox="0 0 7 9"><path d="M.4 1.600h6.200M2.400 1.400v-.8h2.200v.8" stroke="#a8a8a8" stroke-width=".8" fill="none"/><path d="M1 2.400h5l-.5 6h-4z" fill="#a8a8a8"/></svg>


<div class="abs" id="toolbar"></div>
<div class="abs" id="toolhead"></div>
<!-- toolbar icons -->
<svg style="left:0;top:0" width="22" height="420" viewBox="0 0 22 420">
<g fill="none" stroke="#c9c9c9" stroke-width="1.1" stroke-linecap="round" stroke-linejoin="round">
<path d="M4.300 36.800l1.300 1.300-1.300 1.300M6.600 36.800l1.300 1.300-1.300 1.300" stroke="#9a9a9a" stroke-width=".7"/>
<!-- move -->
<g transform="translate(9.7 56.0) scale(0.80) translate(-9.7 -56.0)">
<path d="M9.600 51.800v8.400M5.400 56h8.400" stroke-width="1.300"/><path d="M8.200 53.200l1.400-1.600 1.400 1.600M8.200 58.800l1.400 1.600 1.400-1.600M6.800 54.600l-1.600 1.400 1.600 1.400M12.400 54.600l1.600 1.400-1.600 1.400" stroke-width="1"/>
</g>
<!-- marquee -->
<g transform="translate(9.7 70.0) scale(0.80) translate(-9.7 -70.0)">
<rect x="5.600" y="66.200" width="8.200" height="7.600" stroke-dasharray="1.600 1.100" stroke-width="1"/>
</g>
<!-- lasso -->
<g transform="translate(9.7 83.0) scale(0.80) translate(-9.7 -83.0)">
<ellipse cx="9.800" cy="82.200" rx="4.200" ry="2.800" transform="rotate(-14 9.800 82.200)" stroke-width="1.200"/><path d="M6.400 84.200q-.6 1.800.8 2.600" stroke-width="1"/>
</g>
<!-- object select -->
<g transform="translate(9.7 96.5) scale(0.80) translate(-9.7 -96.0)">
<path d="M6 92.200l6.400 2.400-2.600 1.200 3.200 3.600-1 .9-3.200-3.600-1.200 2.400z" fill="#c9c9c9" stroke="none"/>
</g>
<!-- crop -->
<g transform="translate(9.7 110.5) scale(0.80) translate(-9.7 -111.0)">
<path d="M7 106v7.600h7.600M4.600 108.400h7.600v7.600" stroke-width="1.200"/>
</g>
<!-- frame -->
<g transform="translate(9.7 123.6) scale(0.80) translate(-9.7 -123.6)">
<rect x="5.600" y="119.800" width="8.200" height="7.600" stroke-width="1.100"/><path d="M5.600 119.800l8.200 7.600M13.800 119.800l-8.200 7.600" stroke-width=".9"/>
</g>
<!-- eyedropper -->
<g transform="translate(9.7 137.0) scale(0.80) translate(-9.7 -137.0)">
<path d="M5.400 141.200l1-2.600 4.200-4.200 1.700 1.700-4.200 4.200z" fill="#c9c9c9" stroke="none"/><path d="M10.400 133.600l2.600-1.400 1 1-1.400 2.600z" fill="#c9c9c9" stroke="none"/>
</g>
<!-- healing -->
<g transform="translate(9.7 150.5) scale(0.80) translate(-9.7 -150.5)">
<rect x="4.400" y="148.200" width="10.600" height="4.600" rx="1.600" transform="rotate(-40 9.700 150.500)" fill="#c9c9c9" stroke="none"/>
</g>
<!-- brush -->
<g transform="translate(9.7 164.0) scale(0.80) translate(-9.7 -164.0)">
<path d="M13.600 159.600l-5 5.400" stroke-width="1.700"/><path d="M7.800 165.600l-2.400 2.800" stroke-width="2.300"/>
</g>
<!-- stamp -->
<g transform="translate(9.7 177.6) scale(0.80) translate(-9.7 -177.6)">
<path d="M9.700 173.200a1.800 1.800 0 0 1 1.200 3.200v1.600h2.600v2.200h-7.600v-2.200h2.600v-1.600a1.800 1.800 0 0 1 1.200-3.200z" fill="#c9c9c9" stroke="none"/><path d="M5.600 182h8.200" stroke-width=".9"/>
</g>
<!-- history brush -->
<g transform="translate(9.7 191.0) scale(0.80) translate(-9.7 -191.0)">
<path d="M13.600 186.600l-5 5.400" stroke-width="1.600"/><path d="M7.800 192.600l-2.200 2.600" stroke-width="2.200"/><path d="M5 188.400q1.600-2.400 4-2" stroke-width=".9"/>
</g>
<!-- eraser -->
<g transform="translate(9.7 205.0) scale(0.80) translate(-9.7 -205.0)">
<path d="M5.200 206.200l4.600-4.400 4.200 2.400-4.600 4.400z" fill="#c9c9c9" stroke="none"/><path d="M5 209h8.600" stroke-width=".9"/>
</g>
<!-- gradient -->
<g transform="translate(9.7 218.0) scale(0.80) translate(-9.7 -218.0)">
<rect x="5.200" y="214.200" width="9.200" height="7.600" stroke-width="1"/><rect x="9.400" y="214.700" width="4.600" height="6.600" fill="#cfcfcf" stroke="none"/>
</g>
<!-- blur -->
<g transform="translate(9.7 232.0) scale(0.80) translate(-9.7 -232.0)">
<path d="M9.700 227.600c1.600 2.400 3 3.800 3 5.600a3 3 0 0 1-6 0c0-1.800 1.400-3.200 3-5.600z" fill="#c9c9c9" stroke="none"/>
</g>
<!-- dodge -->
<g transform="translate(9.7 245.0) scale(0.80) translate(-9.7 -245.0)">
<circle cx="10.800" cy="243.200" r="2.900" fill="#c9c9c9" stroke="none"/><path d="M8.600 245.600l-3 3.200" stroke-width="1.500"/>
</g>
<!-- pen -->
<g transform="translate(9.7 259.0) scale(0.80) translate(-9.7 -259.0)">
<path d="M12.800 255l2 2-3.400 2.200-4.400 3.600-1.600.6.600-1.600 3.600-4.400z" fill="#c9c9c9" stroke="none"/>
</g>
<!-- type -->
<g transform="translate(9.7 272.6) scale(0.80) translate(-9.7 -272.6)">
<path d="M5.800 271v-2.400h7.800v2.400M9.700 268.600v8.200M8 276.800h3.400" stroke-width="1.500" stroke-linecap="butt"/>
</g>
<!-- path select -->
<g transform="translate(9.7 286.0) scale(0.80) translate(-9.7 -286.0)">
<path d="M7.600 281.200v9l2.200-2 1.600 3.200 1.300-.6-1.600-3.200h2.800z" fill="#c9c9c9" stroke="none"/>
</g>
<!-- hand -->
<g transform="translate(9.7 313.4) scale(0.80) translate(-9.7 -313.4)">
<path d="M6.600 313.200v-3.400a.8 .8 0 0 1 1.600 0v-1.200a.8 .8 0 0 1 1.600 0v-.4a.8 .8 0 0 1 1.600 0v.8a.8 .8 0 0 1 1.600 0v5.400q0 3.400-3.400 3.400t-4.400-2.600l-1.200-2.600q.8-1.200 2 .2z" fill="#c9c9c9" stroke="none"/>
</g>
<!-- zoom -->
<g transform="translate(9.7 327.0) scale(0.80) translate(-9.7 -327.0)">
<circle cx="8.600" cy="325.600" r="3" stroke-width="1.300"/><path d="M10.800 327.800l3 3" stroke-width="1.600"/>
</g>
<!-- more -->
<g transform="translate(9.7 339.6) scale(1.00) translate(-9.7 -339.6)">
<circle cx="6.600" cy="339.600" r="1" fill="#c9c9c9" stroke="none"/><circle cx="9.800" cy="339.600" r="1" fill="#c9c9c9" stroke="none"/><circle cx="13" cy="339.600" r="1" fill="#c9c9c9" stroke="none"/>
</g>
<!-- default / swap -->
<g transform="translate(9.7 352.5) scale(1.00) translate(-9.7 -352.5)">
<rect x="3.400" y="350.400" width="3" height="3" fill="#111" stroke="#ddd" stroke-width=".5"/><rect x="5" y="352" width="3" height="3" fill="#eee" stroke="none"/>
<path d="M11.800 350.400q3 0 3 3M11.800 350.400l1-1M11.800 350.400l1 1M14.800 353.400l-1-1M14.800 353.400l1-1" stroke-width=".8"/>
</g>
<!-- quick mask -->
<g transform="translate(9.7 383.0) scale(0.80) translate(-9.7 -383.0)">
<rect x="5" y="379.200" width="10" height="7.400" stroke-width="1"/><ellipse cx="10" cy="382.900" rx="2.400" ry="1.800" stroke-dasharray="1 .8" stroke-width=".7"/>
</g>
<!-- screen mode -->
<g transform="translate(9.7 396.0) scale(0.80) translate(-9.7 -396.0)">
<rect x="5" y="394" width="8" height="5.400" stroke-width="1"/><path d="M7 394v-1.600h8v5.400h-2" stroke-width="1"/>
</g>
</g>
<g fill="#9a9a9a"><path d="M15 60v2h-2zM15 74v2h-2zM15 87v2h-2zM15 101v2h-2zM15 115v2h-2zM15 141v2h-2zM15 155v2h-2zM15 169v2h-2zM15 182v2h-2zM15 195v2h-2zM15 209v2h-2zM15 222v2h-2zM15 235v2h-2zM15 249v2h-2zM15 263v2h-2zM15 277v2h-2zM15 291v2h-2zM17 304v2h-2zM15 317v2h-2zM15 343v2h-2zM15 400v2h-2z"/></g>
</svg>
<div class="abs" style="left:2.500px;top:294px;width:14px;height:10.500px;background:#2c2c2c;border-radius:1px"></div>
<svg style="left:4.500px;top:295.500px" width="10" height="8" viewBox="0 0 10 8"><rect x=".7" y=".7" width="8.600" height="6.200" fill="#5a5a5a" stroke="#d6d6d6" stroke-width="1.100"/></svg>
<div class="abs" style="left:7.600px;top:363.600px;width:9.400px;height:9px;background:#fafafa"></div>
<div class="abs" style="left:2.400px;top:358.600px;width:9px;height:8.800px;background:#000;border:.5px solid #6a6a6a"></div>


<!-- shape tool flyout -->
<div class="abs" id="fly"></div>
<div class="abs" id="flysel"></div>
<div class="abs" style="left:22px;top:297px;width:2.600px;height:2.600px;background:#e6e6e6"></div>
<svg style="left:28px;top:293px" width="12" height="61" viewBox="0 0 12 61"><g fill="none" stroke="#d8d8d8" stroke-width="1">
<rect x="1.600" y="2.600" width="8.200" height="6" fill="#6a6a6a"/>
<ellipse cx="5.700" cy="15.600" rx="4.200" ry="3.100"/>
<path d="M5.700 22.400l4 6.200h-8z"/>
<path d="M3.600 32.400h4.200l2 3.200-2 3.200h-4.200l-2-3.200z"/>
<path d="M1.800 48.400l7.600-6.600"/>
<path d="M2.400 59c-1.600-1.200-.6-3 .8-2.600-1-1.800.8-3.200 2-2 .4-1.800 3-1.800 3 .2 1.600-.6 2.600 1.200 1.200 2.200 1.200 1.200 0 2.800-1.400 2.200h-2.200l.4-2.400-1.600 2.400z"/>
</g></svg>
<span class="t f" style="top:295.300px">Rectangle Tool</span>
<span class="t f" style="top:305.500px">Ellipse Tool</span>
<span class="t f" style="top:315.200px">Triangle Tool</span>
<span class="t f" style="top:325.100px">Polygon Tool</span>
<span class="t f" style="top:334.800px">Line Tool</span>
<span class="t f" style="top:345.200px">Custom Shape Tool</span>
<span class="t u" style="top:295.500px">U</span>
<span class="t u" style="top:305.700px">U</span>
<span class="t u" style="top:315.400px">U</span>
<span class="t u" style="top:325.300px">U</span>
<span class="t u" style="top:335px">U</span>
<span class="t u" style="top:345.400px">U</span>
<svg style="left:96.500px;top:349.500px" width="6" height="8" viewBox="0 0 6 8"><path d="M.6 .6v5.600l1.400-1.200 1 2.200 1-.5-1-2.100h1.800z" fill="#fff" stroke="#222" stroke-width=".5"/></svg>

</body>
</html>
